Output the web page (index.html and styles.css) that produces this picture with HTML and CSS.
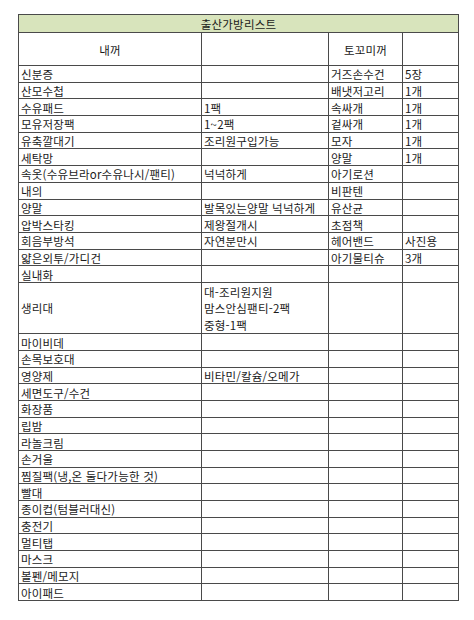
FILE: index.html
```html
<!DOCTYPE html>
<html lang="ko">
<head>
<meta charset="utf-8">
<title>출산가방리스트</title>
<link rel="stylesheet" href="styles.css">
</head>
<body>
<table class="sheet">
  <colgroup>
    <col class="c1"><col class="c2"><col class="c3"><col class="c4">
  </colgroup>
  <tr class="title"><td colspan="4">출산가방리스트</td></tr>
  <tr class="head"><td class="center">내꺼</td><td></td><td class="center">토꼬미꺼</td><td></td></tr>
  <tr><td>신분증</td><td></td><td>거즈손수건</td><td>5장</td></tr>
  <tr><td>산모수첩</td><td></td><td>배냇저고리</td><td>1개</td></tr>
  <tr><td>수유패드</td><td>1팩</td><td>속싸개</td><td>1개</td></tr>
  <tr><td>모유저장팩</td><td>1~2팩</td><td>겉싸개</td><td>1개</td></tr>
  <tr><td>유축깔대기</td><td>조리원구입가능</td><td>모자</td><td>1개</td></tr>
  <tr><td>세탁망</td><td></td><td>양말</td><td>1개</td></tr>
  <tr><td>속옷(수유브라or수유나시/팬티)</td><td>넉넉하게</td><td>아기로션</td><td></td></tr>
  <tr><td>내의</td><td></td><td>비판텐</td><td></td></tr>
  <tr><td>양말</td><td>발목있는양말 넉넉하게</td><td>유산균</td><td></td></tr>
  <tr><td>압박스타킹</td><td>제왕절개시</td><td>초점책</td><td></td></tr>
  <tr><td>회음부방석</td><td>자연분만시</td><td>헤어밴드</td><td>사진용</td></tr>
  <tr><td>얇은외투/가디건</td><td></td><td>아기물티슈</td><td>3개</td></tr>
  <tr><td>실내화</td><td></td><td></td><td></td></tr>
  <tr class="tall"><td>생리대</td><td>대-조리원지원<br>맘스안심팬티-2팩<br>중형-1팩</td><td></td><td></td></tr>
  <tr><td>마이비데</td><td></td><td></td><td></td></tr>
  <tr><td>손목보호대</td><td></td><td></td><td></td></tr>
  <tr><td>영양제</td><td>비타민/칼슘/오메가</td><td></td><td></td></tr>
  <tr><td>세면도구/수건</td><td></td><td></td><td></td></tr>
  <tr><td>화장품</td><td></td><td></td><td></td></tr>
  <tr><td>립밤</td><td></td><td></td><td></td></tr>
  <tr><td>라놀크림</td><td></td><td></td><td></td></tr>
  <tr><td>손거울</td><td></td><td></td><td></td></tr>
  <tr><td>찜질팩(냉,온 둘다가능한 것)</td><td></td><td></td><td></td></tr>
  <tr><td>빨대</td><td></td><td></td><td></td></tr>
  <tr><td>종이컵(텀블러대신)</td><td></td><td></td><td></td></tr>
  <tr><td>충전기</td><td></td><td></td><td></td></tr>
  <tr><td>멀티탭</td><td></td><td></td><td></td></tr>
  <tr><td>마스크</td><td></td><td></td><td></td></tr>
  <tr><td>볼펜/메모지</td><td></td><td></td><td></td></tr>
  <tr><td>아이패드</td><td></td><td></td><td></td></tr>
</table>
</body>
</html>
```

FILE: styles.css
```css
html, body {
  margin: 0;
  padding: 0;
  background: #ffffff;
}

body {
  padding: 14px 0 0 18px;
  font-family: "Noto Sans CJK KR", "Noto Sans", sans-serif;
  font-size: 11.5px;
  letter-spacing: 0.2px;
  color: #1a1a1a;
}

.sheet {
  border-collapse: collapse;
  table-layout: fixed;
  width: 440px;
}

.c1 { width: 183px; }
.c2 { width: 127px; }
.c3 { width: 74px; }
.c4 { width: 56px; }

.sheet td {
  box-sizing: border-box;
  border: 1px solid #4a4a4a;
  height: 16.7px;
  padding: 1px 2px 0;
  line-height: 14px;
  white-space: nowrap;
  overflow: hidden;
  vertical-align: middle;
}

.sheet .title td {
  background: #d8e4bc;
  text-align: center;
  height: 18px;
}

.sheet .head td {
  height: 33px;
}

.sheet .center {
  text-align: center;
}

.sheet .tall td {
  height: 50px;
  line-height: 16.4px;
}
```
